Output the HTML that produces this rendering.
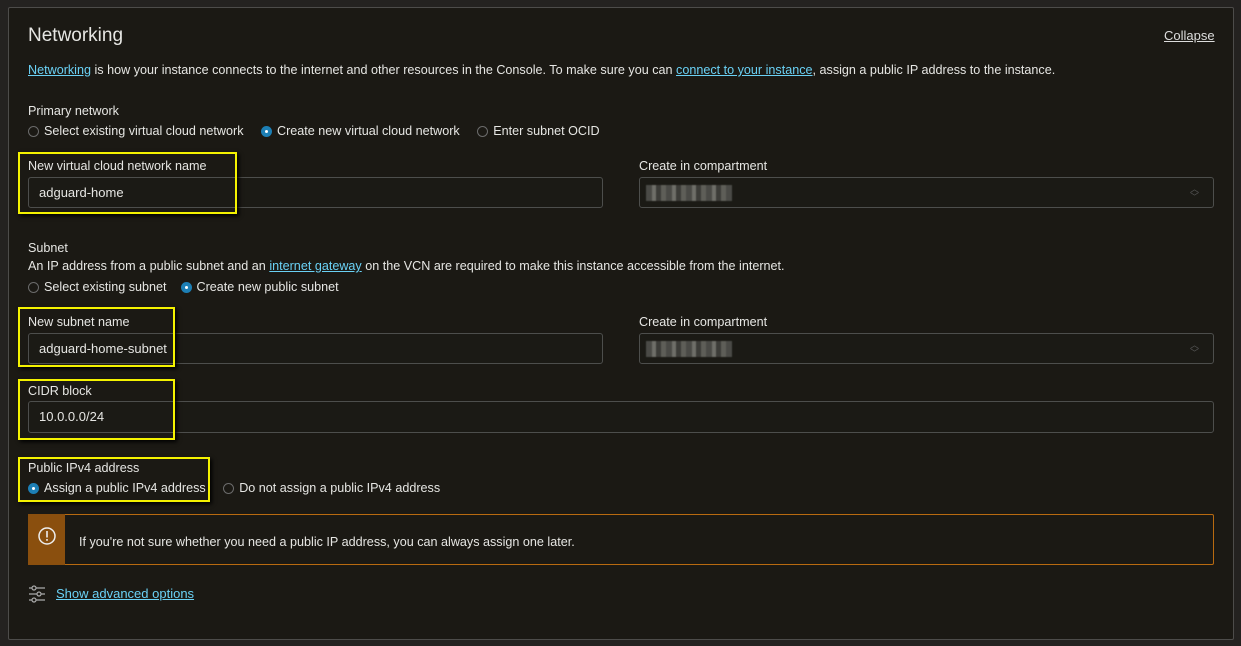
<!DOCTYPE html><html><head><style>
body{margin:0;width:1241px;height:646px;background:#242220;font-family:"Liberation Sans",sans-serif;color:#e6e6e3;position:relative;overflow:hidden}
.p{position:absolute;left:8px;top:7px;width:1224px;height:631px;background:#1b1914;border:1px solid #4d4c4a;border-radius:2px}
.a{position:absolute;white-space:nowrap;font-size:12.6px}
a{color:#6ad1f5;text-decoration:underline}
.in{position:absolute;border:1px solid #4d4e4c;border-radius:3px;background:#1b1a15;box-sizing:border-box;font-size:13px;padding-left:10px;line-height:29px}
.r{display:inline-block;width:11px;height:11px;border:1px solid #6b6b6b;border-radius:50%;vertical-align:-2px;margin-right:5px;box-sizing:border-box;position:relative}
.r.on{background:#1d7fb5;border-color:#1d7fb5}
.r.on:after{content:"";position:absolute;left:3px;top:3px;width:3px;height:3px;background:#fff;border-radius:50%}
.y{position:absolute;border:2px solid #f4f200;box-shadow:2px 2px 4px #000}
.blur{position:absolute;left:646px;width:86px;height:16px;background:repeating-linear-gradient(90deg,#4a4a46 0 6px,#6e6e68 6px 10px,#3c3c38 10px 15px,#5e5e58 15px 20px);filter:blur(0.6px)}
.chev{position:absolute;left:1190px;color:#555;font-size:9px;line-height:8px}
</style></head><body>
<div class="p"></div>
<div class="a" style="left:28px;top:25px;font-size:19px">Networking</div>
<div class="a" style="left:1164px;top:28px;font-size:13px"><a style="color:#ddd">Collapse</a></div>
<div class="a" style="left:28px;top:63px"><a>Networking</a> is how your instance connects to the internet and other resources in the Console. To make sure you can <a>connect to your instance</a>, assign a public IP address to the instance.</div>
<div class="a" style="left:28px;top:104px">Primary network</div>
<div class="a" style="left:28px;top:124px"><span class="r"></span>Select existing virtual cloud network &nbsp;&nbsp;&nbsp; <span class="r on"></span>Create new virtual cloud network &nbsp;&nbsp;&nbsp; <span class="r"></span>Enter subnet OCID</div>
<div class="a" style="left:28px;top:159px">New virtual cloud network name</div>
<div class="in" style="left:28px;top:177px;width:575px;height:31px">adguard-home</div>
<div class="a" style="left:639px;top:159px">Create in compartment</div>
<div class="in" style="left:639px;top:177px;width:575px;height:31px"></div>
<div class="blur" style="top:185px"></div>
<div class="chev" style="top:185px">︿<br>﹀</div>
<div class="y" style="left:18px;top:152px;width:215px;height:58px"></div>
<div class="a" style="left:28px;top:241px">Subnet</div>
<div class="a" style="left:28px;top:259px">An IP address from a public subnet and an <a>internet gateway</a> on the VCN are required to make this instance accessible from the internet.</div>
<div class="a" style="left:28px;top:280px"><span class="r"></span>Select existing subnet &nbsp;&nbsp; <span class="r on"></span>Create new public subnet</div>
<div class="a" style="left:28px;top:315px">New subnet name</div>
<div class="in" style="left:28px;top:333px;width:575px;height:31px">adguard-home-subnet</div>
<div class="a" style="left:639px;top:315px">Create in compartment</div>
<div class="in" style="left:639px;top:333px;width:575px;height:31px"></div>
<div class="blur" style="top:341px"></div>
<div class="chev" style="top:341px">︿<br>﹀</div>
<div class="y" style="left:18px;top:307px;width:153px;height:56px"></div>
<div class="a" style="left:28px;top:384px">CIDR block</div>
<div class="in" style="left:28px;top:401px;width:1186px;height:32px">10.0.0.0/24</div>
<div class="y" style="left:18px;top:379px;width:153px;height:57px"></div>
<div class="a" style="left:28px;top:461px">Public IPv4 address</div>
<div class="a" style="left:28px;top:481px"><span class="r on"></span>Assign a public IPv4 address &nbsp;&nbsp;&nbsp; <span class="r"></span>Do not assign a public IPv4 address</div>
<div class="y" style="left:18px;top:457px;width:188px;height:41px"></div>
<div style="position:absolute;left:28px;top:514px;width:1186px;height:51px;border:1px solid #b86a10;box-sizing:border-box;border-radius:2px"></div>
<div style="position:absolute;left:28px;top:514px;width:37px;height:51px;background:#8a4f0e"></div>
<svg style="position:absolute;left:37px;top:526px" width="20" height="20"><circle cx="10" cy="10" r="8" fill="none" stroke="#eee" stroke-width="1.5"/><rect x="9.2" y="5" width="1.6" height="6.5" fill="#eee"/><rect x="9.2" y="13" width="1.6" height="1.8" fill="#eee"/></svg>
<div class="a" style="left:79px;top:535px">If you're not sure whether you need a public IP address, you can always assign one later.</div>
<svg style="position:absolute;left:28px;top:585px" width="18" height="18" stroke="#aaa" fill="none" stroke-width="1.2"><path d="M1 3h3M8 3h9M1 9h8M13 9h4M1 15h3M8 15h9"/><circle cx="6" cy="3" r="2"/><circle cx="11" cy="9" r="2"/><circle cx="6" cy="15" r="2"/></svg>
<div class="a" style="left:56px;top:586px;font-size:13px"><a>Show advanced options</a></div>
</body></html>
